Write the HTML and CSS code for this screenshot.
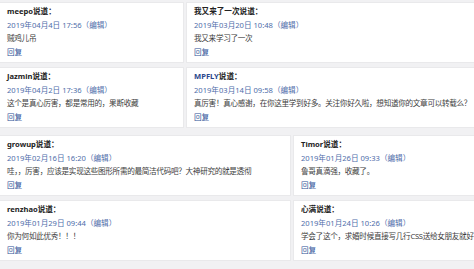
FILE: index.html
```html
<!DOCTYPE html>
<html lang="zh-CN">
  <head>
    <meta charset="UTF-8">
    <meta name="viewport" content="width=device-width, initial-scale=1.0">
    <title>评论</title>
    <link rel="stylesheet" href="styles.css">
  </head>
  <body>

    <section class="commentList">

      <div class="commentGroup narrowGroup">
        <div class="commentRow">
          <div class="commentCard">
            <p class="author">meepo说道：</p>
            <p class="date">2019年04月4日 17:56（编辑）</p>
            <p class="content">贼鸡儿吊</p>
            <a class="reply">回复</a>
          </div>
          <div class="commentCard">
            <p class="author">我又来了一次说道：</p>
            <p class="date">2019年03月20日 10:48（编辑）</p>
            <p class="content">我又来学习了一次</p>
            <a class="reply">回复</a>
          </div>
        </div>

        <div class="commentRow">
          <div class="commentCard">
            <p class="author">Jazmin说道：</p>
            <p class="date">2019年04月2日 17:36（编辑）</p>
            <p class="content">这个是真心厉害，都是常用的，果断收藏</p>
            <a class="reply">回复</a>
          </div>
          <div class="commentCard">
            <p class="author"><span class="authorLink">MPFLY</span>说道：</p>
            <p class="date">2019年03月14日 09:58（编辑）</p>
            <p class="content">真厉害！真心感谢，在你这里学到好多。关注你好久啦，想知道你的文章可以转载么？</p>
            <a class="reply">回复</a>
          </div>
        </div>
      </div>

      <div class="commentGroup wideGroup">
        <div class="commentRow">
          <div class="commentCard">
            <p class="author">growup说道：</p>
            <p class="date">2019年02月16日 16:20（编辑）</p>
            <p class="content">哇，，厉害，应该是实现这些图形所需的最简洁代码吧？大神研究的就是透彻</p>
            <a class="reply">回复</a>
          </div>
          <div class="commentCard">
            <p class="author">Timor说道：</p>
            <p class="date">2019年01月26日 09:33（编辑）</p>
            <p class="content">鲁哥真滴强，收藏了。</p>
            <a class="reply">回复</a>
          </div>
        </div>

        <div class="commentRow">
          <div class="commentCard">
            <p class="author">renzhao说道：</p>
            <p class="date">2019年01月29日 09:44（编辑）</p>
            <p class="content">你为何如此优秀！！！</p>
            <a class="reply">回复</a>
          </div>
          <div class="commentCard">
            <p class="author">心满说道：</p>
            <p class="date">2019年01月24日 10:26（编辑）</p>
            <p class="content">学会了这个，求婚时候直接写几行CSS送给女朋友就好了</p>
            <a class="reply">回复</a>
          </div>
        </div>
      </div>

    </section>

  </body>
</html>
```
FILE: styles.css
```css
body {
  font-family: "Noto Sans", "Noto Sans CJK SC", sans-serif;
  font-size: 7.6px;
  line-height: 13.5px;
  background-color: rgb(241, 241, 243);
  color: rgb(51, 51, 51);
  margin: 0px;
  overflow: hidden;
}

.commentList {
  display: flex;
  flex-direction: column;
  gap: 7px;
  padding-top: 2px;
  margin: 0px -4px 0px -1px;
}

.commentGroup {
  display: flex;
  flex-direction: column;
  gap: 4px;
}

.commentRow {
  display: flex;
  gap: 2px;
}

.commentCard {
  background-color: white;
  border: 1px solid rgb(233, 233, 235);
  padding: 2px 6px 3px 7px;
  flex: 1;
  min-width: 0px;
  overflow: hidden;
}

.narrowGroup .commentCard:first-child {
  flex: 0 0 170px;
}

.wideGroup .commentCard:first-child {
  flex: 0 0 277px;
}

p {
  margin: 0px;
  white-space: nowrap;
}

.author {
  font-weight: bold;
  color: rgb(34, 34, 34);
}

.authorLink {
  color: rgb(40, 70, 140);
}

.date {
  color: rgb(80, 110, 170);
}

.content {
  color: rgb(60, 60, 60);
  letter-spacing: -0.3px;
}

.reply {
  display: block;
  color: rgb(45, 80, 150);
  cursor: pointer;
}
```
